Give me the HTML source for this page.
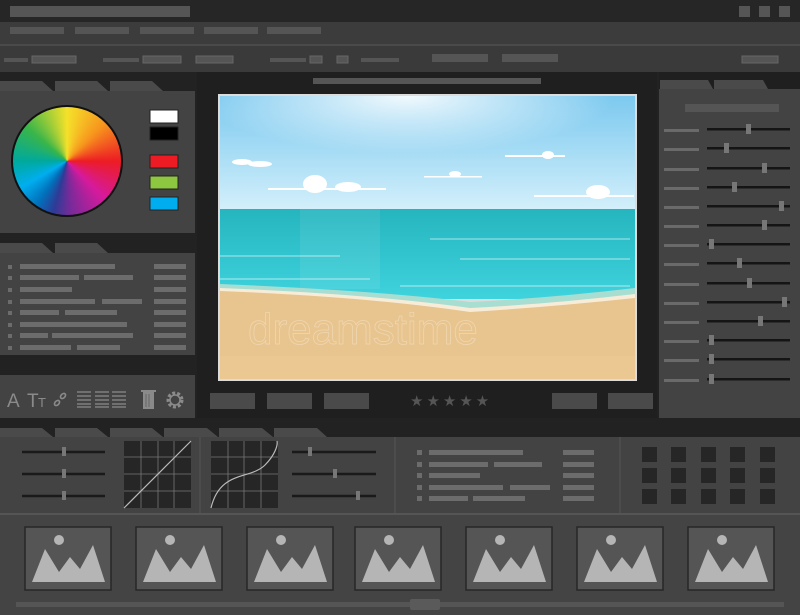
<!DOCTYPE html>
<html><head><meta charset="utf-8"><style>
html,body{margin:0;padding:0;width:800px;height:615px;overflow:hidden;background:#222;}
#wheel{position:absolute;left:11px;top:105px;width:108px;height:108px;border-radius:50%;border:2px solid #111;
background:conic-gradient(from 0deg,#f5e12a,#f7941d 45deg,#ed1c24 90deg,#d61a9c 135deg,#7a2a9a 175deg,#2e3b96 195deg,#0072bc 215deg,#00aeef 240deg,#00a99d 270deg,#39b54a 310deg,#f5e12a 360deg);}
svg{position:absolute;left:0;top:0}
.t{font-family:"Liberation Sans",sans-serif;fill:#8a8a8a}
</style></head><body>
<svg width="800" height="615" viewBox="0 0 800 615">
<defs>
<linearGradient id="sky" x1="0" y1="0" x2="0" y2="1"><stop offset="0" stop-color="#7cc9ef"/><stop offset="1" stop-color="#d4f0fb"/></linearGradient>
<radialGradient id="sun" cx="0.45" cy="0" r="0.5"><stop offset="0" stop-color="#fff" stop-opacity="0.9"/><stop offset="1" stop-color="#fff" stop-opacity="0"/></radialGradient>
<linearGradient id="sea" x1="0" y1="0" x2="0" y2="1"><stop offset="0" stop-color="#25b5bf"/><stop offset="1" stop-color="#3fd3dd"/></linearGradient>
<g id="th"><rect width="86" height="63" fill="#555" stroke="#262626" stroke-width="1.5"/><circle cx="34" cy="13" r="5" fill="#b5b5b5"/><polygon points="7,55 20,22 34,45 45,30 55,42 68,18 80,55" fill="#b5b5b5"/></g>
</defs>
<rect x="0" y="0" width="800" height="22" fill="#262626"/>
<rect x="10" y="6" width="180" height="11" fill="#555"/>
<rect x="739" y="6" width="11" height="11" fill="#555"/><rect x="759" y="6" width="11" height="11" fill="#555"/><rect x="779" y="6" width="11" height="11" fill="#555"/>
<rect x="0" y="22" width="800" height="22" fill="#3c3c3c"/>
<g fill="#555"><rect x="10" y="27" width="54" height="7"/><rect x="75" y="27" width="54" height="7"/><rect x="140" y="27" width="54" height="7"/><rect x="204" y="27" width="54" height="7"/><rect x="267" y="27" width="54" height="7"/></g>
<rect x="0" y="44" width="800" height="2" fill="#4a4a4a"/>
<rect x="0" y="46" width="800" height="26" fill="#3a3a3a"/>
<g fill="#555"><rect x="4" y="58" width="24" height="4"/><rect x="32" y="56" width="44" height="7" stroke="#666"/><rect x="103" y="58" width="36" height="4"/><rect x="143" y="56" width="38" height="7" stroke="#666"/><rect x="196" y="56" width="37" height="7" stroke="#666"/><rect x="270" y="58" width="36" height="4"/><rect x="310" y="56" width="12" height="7" stroke="#666"/><rect x="337" y="56" width="11" height="7" stroke="#666"/><rect x="361" y="58" width="38" height="4"/><rect x="432" y="54" width="56" height="8"/><rect x="502" y="54" width="56" height="8"/><rect x="742" y="56" width="36" height="7" stroke="#666"/></g>
<g fill="#4a4a4a"><polygon points="0,81 42,81 53,91 0,91"/><polygon points="55,81 97,81 108,91 55,91"/><polygon points="110,81 152,81 163,91 110,91"/></g>
<rect x="0" y="91" width="195" height="142" fill="#434343"/>
<rect x="150" y="110" width="28" height="13" fill="#fff" stroke="#222"/><rect x="150" y="127" width="28" height="13" fill="#000" stroke="#222"/>
<rect x="150" y="155" width="28" height="13" fill="#ed1c24" stroke="#222"/><rect x="150" y="176" width="28" height="13" fill="#8dc63f" stroke="#222"/><rect x="150" y="197" width="28" height="13" fill="#00aeef" stroke="#222"/>
<g fill="#4a4a4a"><polygon points="0,243 42,243 53,253 0,253"/><polygon points="55,243 97,243 108,253 55,253"/></g>
<rect x="0" y="253" width="195" height="102" fill="#434343"/>
<g fill="#6c6c6c">
<rect x="8" y="265" width="4" height="4"/><rect x="20" y="264" width="95" height="5"/><rect x="154" y="264" width="32" height="5"/>
<rect x="8" y="276" width="4" height="4"/><rect x="20" y="275" width="59" height="5"/><rect x="84" y="275" width="49" height="5"/><rect x="154" y="275" width="32" height="5"/>
<rect x="8" y="288" width="4" height="4"/><rect x="20" y="287" width="52" height="5"/><rect x="154" y="287" width="32" height="5"/>
<rect x="8" y="300" width="4" height="4"/><rect x="20" y="299" width="75" height="5"/><rect x="102" y="299" width="40" height="5"/><rect x="154" y="299" width="32" height="5"/>
<rect x="8" y="311" width="4" height="4"/><rect x="20" y="310" width="39" height="5"/><rect x="65" y="310" width="52" height="5"/><rect x="154" y="310" width="32" height="5"/>
<rect x="8" y="323" width="4" height="4"/><rect x="20" y="322" width="107" height="5"/><rect x="154" y="322" width="32" height="5"/>
<rect x="8" y="334" width="4" height="4"/><rect x="20" y="333" width="28" height="5"/><rect x="52" y="333" width="81" height="5"/><rect x="154" y="333" width="32" height="5"/>
<rect x="8" y="346" width="4" height="4"/><rect x="20" y="345" width="51" height="5"/><rect x="77" y="345" width="43" height="5"/><rect x="154" y="345" width="32" height="5"/>
</g>
<rect x="0" y="375" width="195" height="43" fill="#434343"/>
<text x="7" y="407" class="t" font-size="19">A</text>
<text x="27" y="407" class="t" font-size="19">T</text><text x="38" y="407" class="t" font-size="13">T</text>
<g stroke="#8a8a8a" stroke-width="1.6" fill="none"><ellipse cx="57" cy="403" rx="3" ry="2" transform="rotate(-45 57 403)"/><ellipse cx="63" cy="396" rx="3" ry="2" transform="rotate(-45 63 396)"/></g>
<g stroke="#8a8a8a" stroke-width="1.2"><path d="M77 392h14M77 396h14M77 400h14M77 404h14M77 407h14M95 392h14M95 396h14M95 400h14M95 404h14M95 407h14M112 392h14M112 396h14M112 400h14M112 404h14M112 407h14"/></g>
<rect x="143" y="392" width="11" height="17" fill="#8a8a8a"/><rect x="141" y="390" width="15" height="2" fill="#8a8a8a"/><path d="M146 394v13M149 394v13" stroke="#666"/>
<circle cx="175" cy="400" r="7" fill="none" stroke="#8a8a8a" stroke-width="3" stroke-dasharray="3 2"/><circle cx="175" cy="400" r="5" fill="none" stroke="#8a8a8a" stroke-width="1.5"/>
<rect x="197" y="72" width="460" height="346" fill="#1f1f1f"/>
<rect x="313" y="78" width="228" height="6" fill="#555"/>
<rect x="218" y="94" width="419" height="287" fill="#dcdcdc"/>
<svg x="220" y="96" width="415" height="283" viewBox="0 0 415 283">
<rect width="415" height="115" fill="url(#sky)"/>
<rect width="415" height="115" fill="url(#sun)"/>
<g fill="#fff"><ellipse cx="22" cy="66" rx="10" ry="3"/><ellipse cx="40" cy="68" rx="12" ry="3"/><ellipse cx="95" cy="88" rx="12" ry="9"/><ellipse cx="128" cy="91" rx="13" ry="5"/><rect x="48" y="92" width="118" height="2"/><ellipse cx="328" cy="59" rx="6" ry="4"/><rect x="285" y="59" width="60" height="2"/><ellipse cx="235" cy="78" rx="6" ry="3"/><rect x="204" y="80" width="58" height="1.5"/><ellipse cx="378" cy="96" rx="12" ry="7"/><rect x="314" y="99" width="100" height="2"/></g>
<rect y="113" width="415" height="90" fill="url(#sea)"/>
<rect x="80" y="113" width="80" height="80" fill="#fff" opacity="0.08"/>
<g stroke="#fff" stroke-opacity="0.6"><path d="M210 143h200M240 163h170M0 160h120M0 183h150M180 190h230"/></g>
<path d="M0 188 Q150 194 250 206 Q330 202 415 192 V283 H0Z" fill="#a8ddd2"/>
<path d="M0 192 Q150 198 250 212 Q330 208 415 198 V283 H0Z" fill="#f7ecd8"/>
<path d="M0 195 Q150 201 250 216 Q330 211 415 202 V283 H0Z" fill="#e8c48f"/>
<path d="M0 260 H415 V283 H0Z" fill="#ecc995" opacity="0.6"/>
<text x="28" y="248" font-family="Liberation Sans,sans-serif" font-size="44" fill="none" stroke="#f3dfbe" stroke-width="0.8" opacity="0.7">dreamstime</text>
</svg>
<g fill="#4a4a4a"><rect x="210" y="393" width="45" height="16"/><rect x="267" y="393" width="45" height="16"/><rect x="324" y="393" width="45" height="16"/><rect x="552" y="393" width="45" height="16"/><rect x="608" y="393" width="45" height="16"/></g>
<text x="410" y="406" font-family="DejaVu Sans,sans-serif" font-size="15" fill="#555" letter-spacing="3">★★★★★</text>
<rect x="659" y="72" width="141" height="346" fill="#1f1f1f"/>
<g fill="#4a4a4a"><polygon points="660,80 708,80 713,89 660,89"/><polygon points="714,80 763,80 768,89 714,89"/></g>
<rect x="659" y="89" width="141" height="329" fill="#434343"/>
<rect x="685" y="104" width="94" height="8" fill="#555"/>
<g id="rs"></g>
<rect x="0" y="418" width="800" height="19" fill="#222"/>
<g fill="#4a4a4a"><polygon points="0,428 42,428 53,437 0,437"/><polygon points="55,428 97,428 108,437 55,437"/><polygon points="110,428 152,428 163,437 110,437"/><polygon points="164,428 207,428 218,437 164,437"/><polygon points="219,428 262,428 273,437 219,437"/><polygon points="274,428 317,428 327,437 274,437"/></g>
<rect x="0" y="437" width="800" height="76" fill="#434343"/>
<path d="M200 437v76M395 437v76M620 437v76" stroke="#555"/>
<g stroke="#1a1a1a" stroke-width="2.5"><path d="M22 452h83M22 474h83M22 496h83M292 452h84M292 474h84M292 496h84"/></g>
<g fill="#777"><rect x="62" y="447" width="4" height="9"/><rect x="62" y="469" width="4" height="9"/><rect x="62" y="491" width="4" height="9"/><rect x="308" y="447" width="4" height="9"/><rect x="333" y="469" width="4" height="9"/><rect x="356" y="491" width="4" height="9"/></g>
<rect x="124" y="441" width="67" height="67" fill="#262626"/><rect x="211" y="441" width="67" height="67" fill="#262626"/>
<g stroke="#777" stroke-width="0.8"><path d="M141 441v67M158 441v67M174 441v67M124 457h67M124 474h67M124 491h67M228 441v67M244 441v67M261 441v67M211 457h67M211 474h67M211 491h67"/></g>
<path d="M124 508L191 441" stroke="#bbb" stroke-width="1.2"/>
<path d="M211 508C220 470 250 480 265 465 C275 455 278 445 277 441" stroke="#bbb" stroke-width="1.2" fill="none"/>
<g fill="#6c6c6c">
<rect x="417" y="450" width="5" height="5"/><rect x="429" y="450" width="94" height="5"/><rect x="563" y="450" width="31" height="5"/>
<rect x="417" y="462" width="5" height="5"/><rect x="429" y="462" width="59" height="5"/><rect x="494" y="462" width="48" height="5"/><rect x="563" y="462" width="31" height="5"/>
<rect x="417" y="473" width="5" height="5"/><rect x="429" y="473" width="51" height="5"/><rect x="563" y="473" width="31" height="5"/>
<rect x="417" y="485" width="5" height="5"/><rect x="429" y="485" width="74" height="5"/><rect x="510" y="485" width="40" height="5"/><rect x="563" y="485" width="31" height="5"/>
<rect x="417" y="496" width="5" height="5"/><rect x="429" y="496" width="39" height="5"/><rect x="473" y="496" width="52" height="5"/><rect x="563" y="496" width="31" height="5"/>
</g>
<g fill="#262626" id="grid"></g>
<rect x="0" y="513" width="800" height="2" fill="#555"/>
<rect x="0" y="515" width="800" height="100" fill="#444"/>
<use href="#th" x="25" y="527"/><use href="#th" x="136" y="527"/><use href="#th" x="247" y="527"/><use href="#th" x="355" y="527"/><use href="#th" x="466" y="527"/><use href="#th" x="577" y="527"/><use href="#th" x="688" y="527"/>
<rect x="16" y="602" width="768" height="5" fill="#555"/>
<rect x="410" y="599" width="30" height="11" rx="2" fill="#5a5a5a"/>
</svg>
<div id="wheel"></div>
<script>
var ns="http://www.w3.org/2000/svg",rs=document.getElementById("rs");
var ys=[129,148,168,187,206,225,244,263,283,302,321,340,359,379],ks=[748,726,764,734,781,764,711,739,749,784,760,711,711,711];
ys.forEach(function(y,i){
 function r(x,yy,w,h,f){var e=document.createElementNS(ns,"rect");e.setAttribute("x",x);e.setAttribute("y",yy);e.setAttribute("width",w);e.setAttribute("height",h);e.setAttribute("fill",f);rs.appendChild(e);}
 r(664,y,35,3,"#6a6a6a");r(707,y-1,83,2.5,"#151515");r(ks[i]-2,y-5,5,10,"#777");
});
var g=document.getElementById("grid");
[642,671,701,730,760].forEach(function(x){[447,468,489].forEach(function(y){var e=document.createElementNS(ns,"rect");e.setAttribute("x",x);e.setAttribute("y",y);e.setAttribute("width",15);e.setAttribute("height",15);g.appendChild(e);});});
</script>
</body></html>
